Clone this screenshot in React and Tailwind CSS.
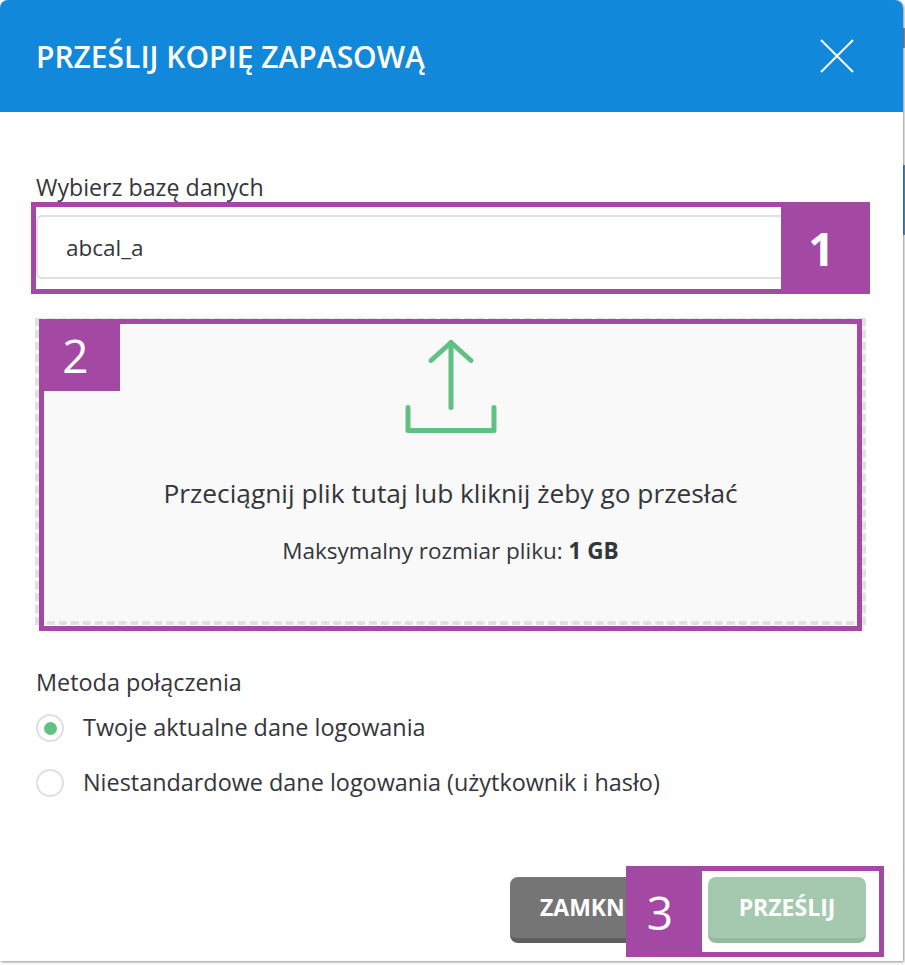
import React from 'react';

const PURPLE = 'border-[5px] border-[#a349a4]';

function Marker({ className, children }) {
  return (
    <div className={`absolute bg-[#a349a4] text-white flex items-center justify-center text-[46px] leading-none pr-2 ${className}`}>
      {children}
    </div>
  );
}

function UploadIcon() {
  return (
    <svg width="94" height="98" viewBox="0 0 94 98" fill="none" stroke="#60c183" strokeWidth="5" strokeLinecap="round" strokeLinejoin="round">
      <path d="M47 5.5 V70.5" />
      <path d="M27 23.5 L47 5.5 L67 23.5" />
      <path d="M4 70.5 V93.5 H90 V70.5" />
    </svg>
  );
}

function Radio({ checked, label }) {
  return (
    <div className="flex items-center h-7 gap-[19px]">
      <div className="w-7 h-7 rounded-full border-2 border-[#e0e0e0] bg-white flex items-center justify-center shrink-0">
        {checked && <div className="w-[13px] h-[13px] rounded-full bg-[#60c183]"></div>}
      </div>
      <span className="text-[23.4px] font-medium text-[#33363b] whitespace-nowrap">{label}</span>
    </div>
  );
}

export default function App() {
  return (
    <div className="relative w-[905px] h-[965px] bg-white overflow-hidden font-['Open_Sans',sans-serif] text-[#33363b]">
      {/* bits of the page behind the dialog */}
      <div className="absolute left-[903px] top-[28px] w-[2px] h-[20px] bg-[#9a9a9a]"></div>
      <div className="absolute left-[903px] top-[165px] w-[2px] h-[70px] bg-[#4a9ad4]"></div>

      <div className="relative w-[903px] h-[961px] bg-white rounded-t-lg shadow-[1px_1px_3px_rgba(0,0,0,0.45)]">
        {/* Header */}
        <div className="h-[112px] bg-[#1288da] rounded-t-lg flex items-center justify-between pl-9 pr-[49px]">
          <h1 className="text-[30px] font-semibold text-white">PRZEŚLIJ KOPIĘ ZAPASOWĄ</h1>
          <svg width="34" height="34" viewBox="0 0 34 34" stroke="white" strokeWidth="2">
            <path d="M1 1 L33 33 M33 1 L1 33" />
          </svg>
        </div>

        {/* Content */}
        <div className="px-9 pt-[59px]">
          <label className="block text-[23.2px] font-medium leading-[32px]">Wybierz bazę danych</label>
          <div className="mt-[12px] h-16 w-[794px] border-2 border-[#e0e0e0] rounded-md bg-white flex items-center pl-7 pt-[2px] text-[22.5px]">
            abcal_a
          </div>

          <div className="mt-[39px] -ml-px w-[831px] h-[307px] border-4 border-dashed border-[#e0e0e0] bg-[#f9f9f9] flex flex-col items-center pt-[15px]">
            <UploadIcon />
            <p className="mt-[41px] text-[26.3px] leading-[34px] whitespace-nowrap">Przeciągnij plik tutaj lub kliknij żeby go przesłać</p>
            <p className="mt-[26px] text-[22.5px] leading-[30px] whitespace-nowrap">
              Maksymalny rozmiar pliku: <strong className="font-bold">1 GB</strong>
            </p>
          </div>

          <div className="mt-[41px] text-[23.4px] font-medium leading-[32px]">Metoda połączenia</div>
          <div className="mt-[16px] flex flex-col gap-[27px]">
            <Radio checked label="Twoje aktualne dane logowania" />
            <Radio label="Niestandardowe dane logowania (użytkownik i hasło)" />
          </div>
        </div>

        {/* Footer */}
        <div className="absolute left-0 right-0 top-[877px] flex justify-end gap-[38px] pr-[37px]">
          <button className="h-[66px] w-[160px] rounded-lg bg-[#757575] border-b-[5px] border-[#5f5f5f] text-white text-[23px] font-bold">ZAMKNIJ</button>
          <button className="h-[66px] w-[158px] rounded-lg bg-[#a4c9af] border-b-[5px] border-[#93bb9f] text-white text-[23px] font-bold">PRZEŚLIJ</button>
        </div>

        {/* Annotation frames */}
        <div className={`absolute left-[31px] top-[202px] w-[839px] h-[92px] ${PURPLE}`}></div>
        <Marker className="left-[781px] top-[202px] w-[89px] h-[92px] font-bold">1</Marker>
        <div className={`absolute left-[39px] top-[319px] w-[823px] h-[312px] ${PURPLE}`}></div>
        <Marker className="left-[39px] top-[319px] w-[81px] h-[72px]">2</Marker>
        <div className={`absolute left-[626px] top-[866px] w-[258px] h-[91px] ${PURPLE}`}></div>
        <Marker className="left-[626px] top-[866px] w-[76px] h-[91px]">3</Marker>
      </div>
    </div>
  );
}
